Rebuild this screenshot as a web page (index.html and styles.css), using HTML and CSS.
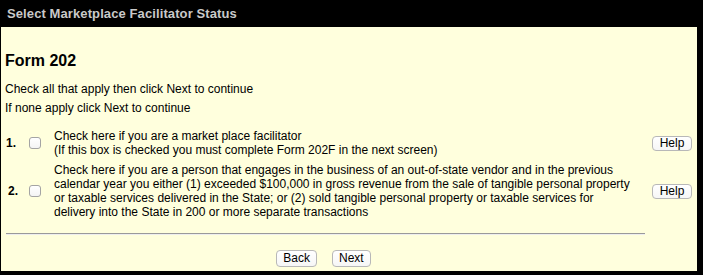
FILE: index.html
```html
<!DOCTYPE html>
<html>
<head>
<meta charset="utf-8">
<title>Select Marketplace Facilitator Status</title>
<link rel="stylesheet" href="styles.css">
</head>
<body>
<div class="page">
  <div class="titlebar">Select Marketplace Facilitator Status</div>
  <div class="content">
    <h2 class="form-title">Form 202</h2>
    <p class="intro intro-first">Check all that apply then click Next to continue</p>
    <p class="intro">If none apply click Next to continue</p>
    <div class="options">
      <div class="option">
        <span class="num">1.</span>
        <span class="check-cell"><input type="checkbox" class="check"></span>
        <div class="desc">Check here if you are a market place facilitator<br>(If this box is checked you must complete Form 202F in the next screen)</div>
        <button class="btn help" type="button">Help</button>
      </div>
      <div class="option">
        <span class="num num-two">2.</span>
        <span class="check-cell"><input type="checkbox" class="check"></span>
        <div class="desc">Check here if you are a person that engages in the business of an out-of-state vendor and in the previous calendar year you either (1) exceeded $100,000 in gross revenue from the sale of tangible personal property or taxable services delivered in the State; or (2) sold tangible personal property or taxable services for delivery into the State in 200 or more separate transactions</div>
        <button class="btn help" type="button">Help</button>
      </div>
    </div>
    <div class="footer">
      <hr class="divider">
      <div class="actions">
        <button class="btn nav" type="button">Back</button>
        <button class="btn nav" type="button">Next</button>
      </div>
    </div>
  </div>
</div>
</body>
</html>
```
FILE: styles.css
```css
html, body {
  margin: 0;
  padding: 0;
  background: #000;
}
body {
  font-family: "Liberation Sans", Arial, Helvetica, sans-serif;
  font-size: 12px;
  color: #000;
}
.page {
  width: 703px;
  height: 275px;
  box-sizing: border-box;
  border-left: 1px solid #000;
  border-right: 6px solid #000;
  border-bottom: 4px solid #000;
  background: #ffffdd;
  display: flex;
  flex-direction: column;
}
.titlebar {
  height: 27px;
  line-height: 27px;
  background: #000;
  color: #c9c9c9;
  font-weight: bold;
  font-size: 13px;
  margin-right: -6px;
  margin-left: -1px;
  padding-left: 7px;
  letter-spacing: 0.1px;
}
.content {
  padding: 0 5px 0 4px;
}
.form-title {
  margin: 25px 0 0 0;
  font-size: 16px;
  line-height: 18px;
  font-weight: bold;
}
.intro {
  margin: 5px 0 0 0;
  line-height: 14px;
}
.intro-first {
  margin-top: 12px;
}
.options {
  margin-top: 14px;
  display: flex;
  flex-direction: column;
  gap: 6px;
}
.option {
  display: grid;
  grid-template-columns: 24px 25px 580px 1fr;
  align-items: center;
}
.num {
  font-weight: bold;
  padding-left: 1px;
}
.num-two {
  padding-left: 3px;
}
.check-cell {
  display: flex;
  align-items: center;
}
.check {
  appearance: none;
  -webkit-appearance: none;
  margin: 0;
  width: 12px;
  height: 12px;
  border: 1px solid #a4a4a4;
  border-radius: 3px;
  background: linear-gradient(#ffffff, #f4f4f4);
  box-sizing: border-box;
}
.desc {
  line-height: 14px;
}
.btn {
  font-family: "Liberation Sans", Arial, Helvetica, sans-serif;
  font-size: 12px;
  color: #000;
  background: linear-gradient(#ffffff, #f6f6f6);
  border: 1px solid #b8b8b8;
  border-radius: 4px;
  padding: 0;
  margin: 0;
  box-sizing: border-box;
}
.help {
  justify-self: end;
  width: 40px;
  height: 15px;
  line-height: 13px;
}
.footer {
  width: 639px;
  margin-left: 1px;
}
.divider {
  margin: 14px 0 0 0;
  height: 0;
  border: 0;
  border-top: 1px solid #9a9a9a;
  border-bottom: 1px solid #eeeeee;
}
.actions {
  display: flex;
  justify-content: center;
  gap: 15px;
  margin-top: 15px;
  padding-right: 4px;
}
.nav {
  height: 17px;
  line-height: 15px;
  padding: 0 6px;
}
```
